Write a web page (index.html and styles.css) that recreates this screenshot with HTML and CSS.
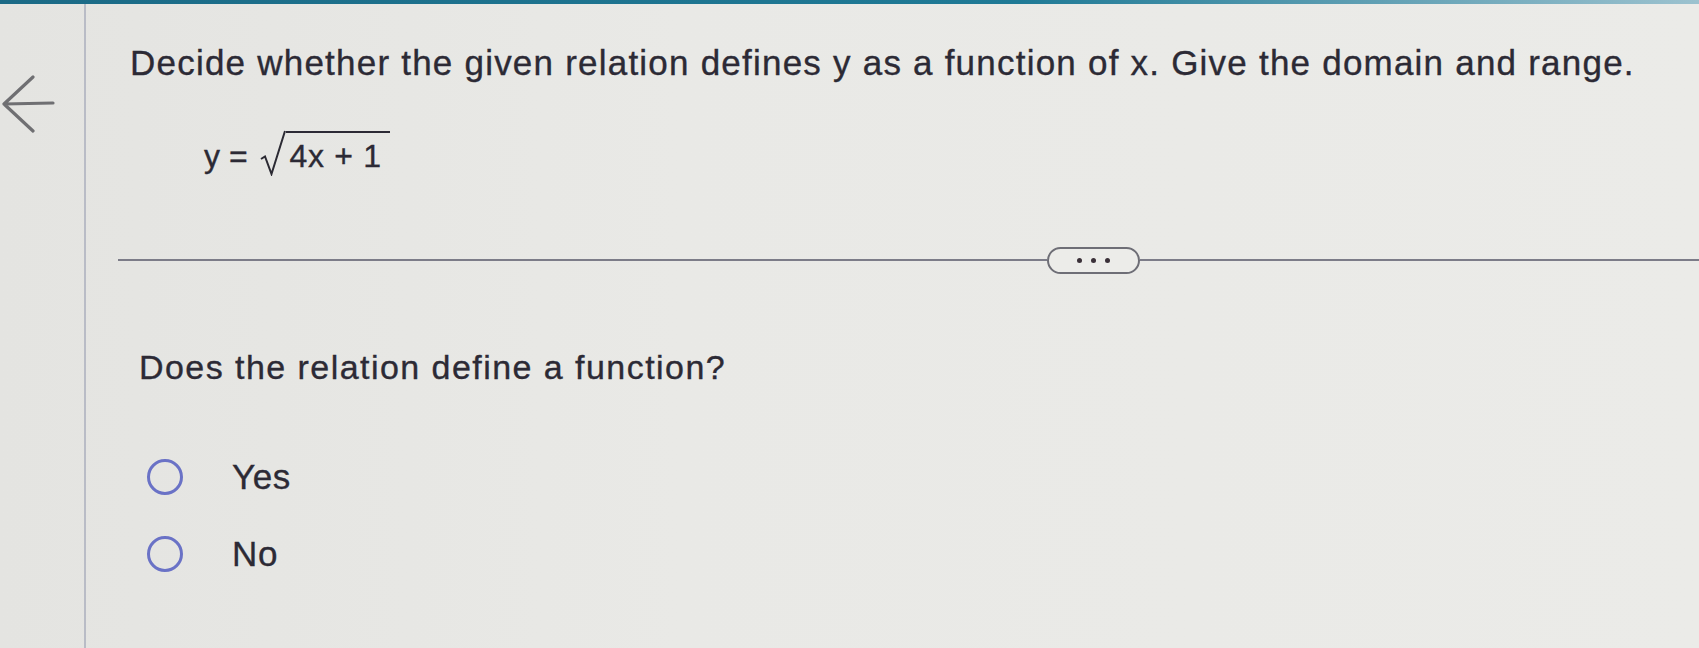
FILE: index.html
```html
<!DOCTYPE html>
<html lang="en">
<head>
<meta charset="utf-8">
<title>Function question</title>
<link rel="stylesheet" href="styles.css">
</head>
<body>
<div class="topbar"></div>
<div class="page">
  <aside class="sidebar">
    <svg class="back" width="56" height="60" viewBox="0 0 56 60" aria-label="Back">
      <path d="M33 2 L4 29 L33 56 M4 29 L53 28" fill="none" stroke="#6f6f72" stroke-width="3.2" stroke-linecap="round" stroke-linejoin="round"/>
    </svg>
  </aside>
  <main class="content">
    <p class="title">Decide whether the given relation defines y as a function of x. Give the domain and range.</p>
    <p class="equation">y = <svg class="radical" width="26" height="46" viewBox="0 0 26 46" aria-hidden="true"><path d="M1 29 L5 26.5 L11.5 44 L25 1" fill="none" stroke="#2b2a33" stroke-width="2" stroke-linejoin="miter"/></svg><span class="radicand">4x + 1</span></p>
    <div class="divider">
      <span class="rule rule-left"></span>
      <span class="pill"><i></i><i></i><i></i></span>
      <span class="rule rule-right"></span>
    </div>
    <p class="question">Does the relation define a function?</p>
    <ul class="options">
      <li class="option"><span class="radio"></span><span class="label">Yes</span></li>
      <li class="option option-no"><span class="radio"></span><span class="label">No</span></li>
    </ul>
  </main>
</div>
</body>
</html>
```

FILE: styles.css
```css
html, body {
  margin: 0;
  padding: 0;
}
body {
  width: 1699px;
  height: 648px;
  overflow: hidden;
  background: linear-gradient(90deg, #e4e4e1 0%, #e9e9e6 40%, #ebebe8 100%);
  font-family: "Liberation Sans", Arial, sans-serif;
  color: #2c2a35;
  -webkit-text-stroke: 0.35px #2c2a35;
}
.topbar {
  height: 4px;
  background: linear-gradient(90deg, #1b6a86 0%, #1f7a96 60%, #9cc2cf 100%);
}
.page {
  display: flex;
  height: 644px;
}
.sidebar {
  width: 86px;
  flex: none;
  border-right: 2px solid #b9bcc6;
  padding-top: 71px;
  box-sizing: border-box;
}
.back {
  display: block;
}
.content {
  flex: 1;
  min-width: 0;
}
.title {
  margin: 38px 0 0 44px;
  font-size: 35px;
  line-height: 42px;
  letter-spacing: 1.22px;
  white-space: nowrap;
}
.equation {
  margin: 46px 0 0 118px;
  font-size: 32px;
  line-height: 36px;
  white-space: nowrap;
}
.radical {
  vertical-align: -9px;
  margin-left: 4px;
}
.radicand {
  display: inline-block;
  border-top: 2px solid #2c2a35;
  line-height: 32px;
  padding: 7px 8px 0 3px;
  letter-spacing: 0.7px;
}
.divider {
  display: flex;
  align-items: center;
  margin: 70px 0 0 32px;
  height: 28px;
}
.rule {
  height: 2px;
  background: #7c7c88;
}
.rule-left {
  width: 929px;
  flex: none;
}
.rule-right {
  flex: 1;
}
.pill {
  flex: none;
  width: 89px;
  height: 23px;
  border: 2px solid #6e6e76;
  border-radius: 14px;
  display: flex;
  align-items: center;
  justify-content: center;
  gap: 9px;
  background: #ecece9;
}
.pill i {
  width: 5px;
  height: 5px;
  border-radius: 50%;
  background: #3a3038;
}
.question {
  margin: 73px 0 0 53px;
  font-size: 34px;
  line-height: 40px;
  letter-spacing: 1.45px;
  white-space: nowrap;
}
.options {
  list-style: none;
  margin: 69px 0 0 61px;
  padding: 0;
}
.option {
  display: flex;
  align-items: center;
  height: 42px;
}
.option-no {
  margin-top: 35px;
}
.radio {
  width: 30px;
  height: 30px;
  border: 3px solid #6a72c6;
  border-radius: 50%;
  flex: none;
}
.label {
  margin-left: 49px;
  font-size: 35px;
  line-height: 42px;
  letter-spacing: 0.6px;
}
```
